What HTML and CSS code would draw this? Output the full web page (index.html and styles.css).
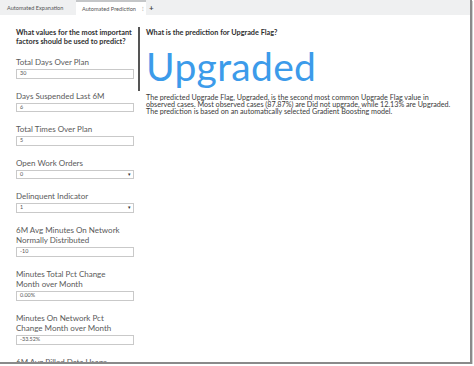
FILE: index.html
```html
<!DOCTYPE html>
<html>
<head>
<meta charset="utf-8">
<link rel="stylesheet" href="styles.css">
</head>
<body>
<div class="app">
  <div class="tabbar">
    <div class="tab">Automated Expanation</div>
    <div class="tab active">Automated Prediction <span class="menu">⁝</span></div>
    <div class="add">+</div>
  </div>
  <div class="main">
    <div class="left">
      <div class="thumb"></div>
      <div class="title">What values for the most important factors should be used to predict?</div>
      <div class="field"><div class="label">Total Days Over Plan</div><div class="input">30</div></div>
      <div class="field"><div class="label">Days Suspended Last 6M</div><div class="input">6</div></div>
      <div class="field"><div class="label">Total Times Over Plan</div><div class="input">5</div></div>
      <div class="field"><div class="label">Open Work Orders</div><div class="input select">0<span class="caret">▾</span></div></div>
      <div class="field"><div class="label">Delinquent Indicator</div><div class="input select">1<span class="caret">▾</span></div></div>
      <div class="field"><div class="label">6M Avg Minutes On Network Normally Distributed</div><div class="input">-10</div></div>
      <div class="field"><div class="label">Minutes Total Pct Change Month over Month</div><div class="input">0.00%</div></div>
      <div class="field"><div class="label">Minutes On Network Pct Change Month over Month</div><div class="input">-33.52%</div></div>
      <div class="field"><div class="label">6M Avg Billed Data Usage</div></div>
    </div>
    <div class="right">
      <div class="title">What is the prediction for Upgrade Flag?</div>
      <div class="big">Upgraded</div>
      <p class="desc">The predicted Upgrade Flag, Upgraded, is the second most common Upgrade Flag value in observed cases. Most observed cases (87.87%) are Did not upgrade, while 12.13% are Upgraded. The prediction is based on an automatically selected Gradient Boosting model.</p>
    </div>
  </div>
</div>
</body>
</html>
```
FILE: styles.css
```css
* { box-sizing: border-box; }
html, body { margin: 0; padding: 0; background: #ffffff; }
body { font-family: Lato, "Open Sans", sans-serif; color: #3a3a3a; }
.app {
  width: 472px;
  height: 364px;
  border-right: 2px solid #8a8a8a;
  border-bottom: 2px solid #8a8a8a;
  box-shadow: 1px 1px 0 #d0d0d0;
  overflow: hidden;
  display: flex;
  flex-direction: column;
}
.tabbar {
  height: 15px;
  background: #eff0f1;
  display: flex;
  align-items: stretch;
  font-size: 5.6px;
  color: #555;
  flex-shrink: 0;
}
.tab {
  padding: 0 7px;
  display: flex;
  align-items: center;
  width: 76px;
}
.tab.active {
  background: #fff;
  border-top: 2px solid #c4c6c8;
  width: 70px;
  padding-left: 6px;
  padding-right: 2px;
  justify-content: space-between;
}
.menu { color: #777; font-size: 6px; }
.add { display: flex; align-items: center; padding-left: 3px; font-size: 8px; color: #444; font-weight: bold; }
.main {
  flex: 1;
  display: grid;
  grid-template-columns: 140px 1fr;
  overflow: hidden;
}
.left {
  position: relative;
  padding: 14px 6px 0 16px;
  overflow: hidden;
}
.thumb {
  position: absolute;
  left: 138px;
  top: 12px;
  width: 1.5px;
  height: 64px;
  background: #555;
}
.title {
  font-weight: bold;
  font-size: 7.3px;
  line-height: 8.5px;
  color: #2f2f2f;
}
.left .title { margin-bottom: 11px; margin-right: -6px; }
.field { margin-bottom: 12px; }
.label {
  font-size: 8px;
  line-height: 10.5px;
  color: #5a5a5a;
  max-width: 112px;
}
.input {
  margin-top: 1.5px;
  width: 118px;
  height: 9.5px;
  border: 1px solid #c9c9c9;
  font-size: 5.4px;
  line-height: 7.5px;
  padding-left: 3px;
  color: #555;
  display: flex;
  justify-content: space-between;
}
.caret { font-size: 5px; padding-right: 2px; color: #333; }
.right {
  padding: 14px 16px 0 6px;
}
.big {
  font-size: 39px;
  line-height: 46px;
  color: #3c9bea;
  margin-top: 5px;
  letter-spacing: 0.3px;
}
.desc {
  margin: 5px 0 0;
  font-size: 7.2px;
  line-height: 7px;
  color: #3a3a3a;
}
```
